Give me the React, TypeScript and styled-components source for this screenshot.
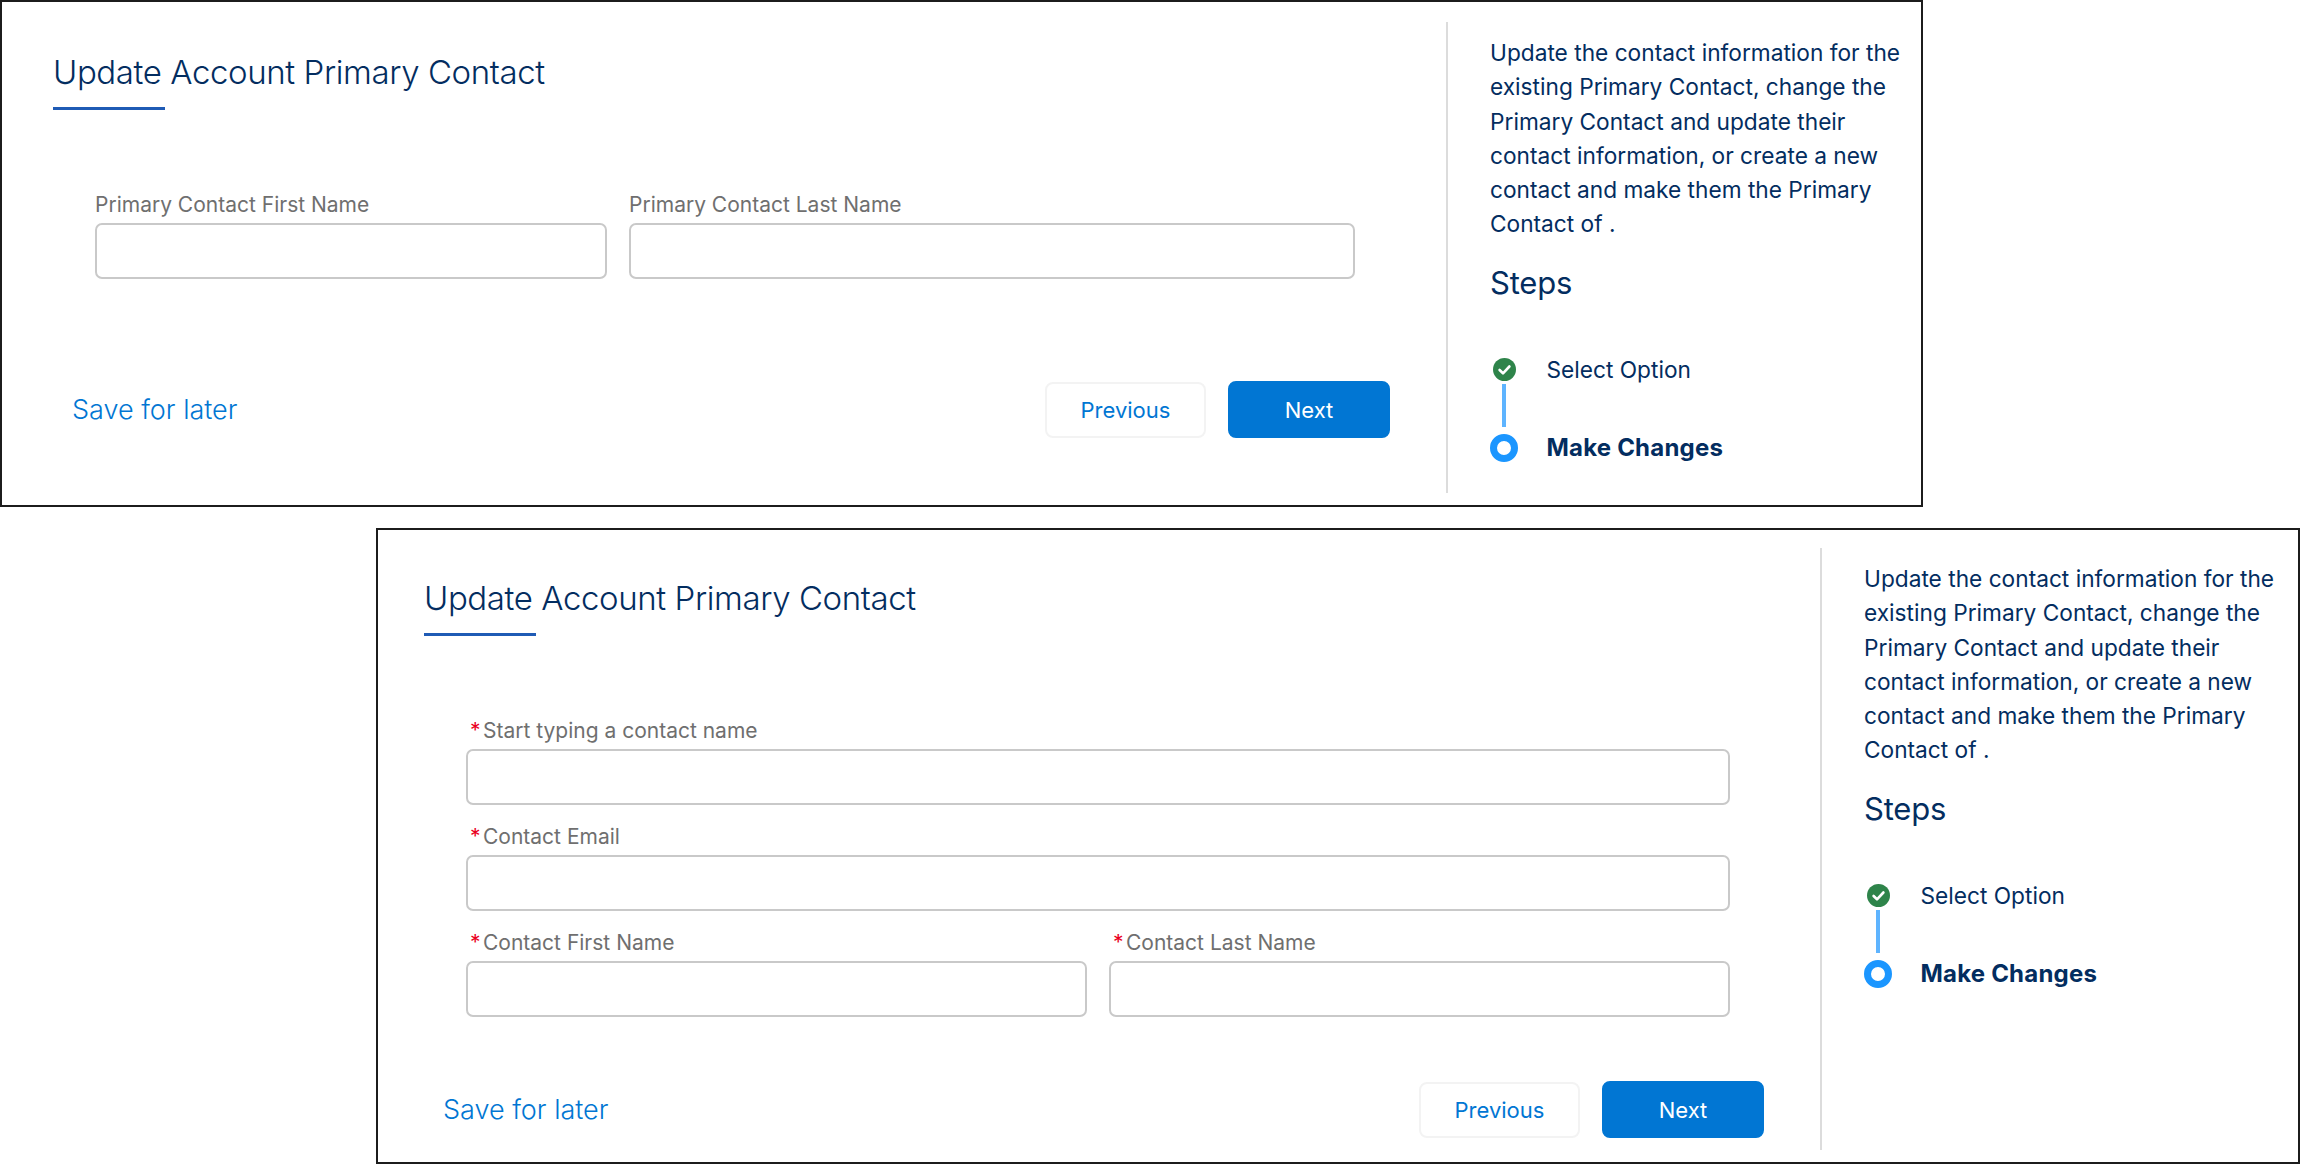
import React from "react";
import styled, { createGlobalStyle } from "styled-components";

const Global = createGlobalStyle`
  html, body { margin: 0; padding: 0; background: #fff; }
  body { font-family: Inter, "Liberation Sans", sans-serif; }
  * { box-sizing: border-box; }
`;

const Page = styled.div`
  width: 2300px;
  height: 1164px;
  overflow: hidden;
  display: flex;
  flex-direction: column;
  gap: 21px;
`;

const Panel = styled.section<{ $x: number; $w: number; $h: number; $pad: number; $top: number }>`
  margin-left: ${(p) => p.$x}px;
  width: ${(p) => p.$w}px;
  height: ${(p) => p.$h}px;
  padding: ${(p) => p.$top}px 0 12px ${(p) => p.$pad}px;
  border: 2px solid #1c1c1c;
  background: #fff;
  display: flex;
`;

const Main = styled.div`
  flex: 1;
  min-width: 0;
  display: flex;
  flex-direction: column;
`;

const Title = styled.h1`
  margin: 30px 0 0;
  font-size: 33px;
  font-weight: 300;
  line-height: 40px;
  letter-spacing: -0.4px;
  color: #032d60;
`;

const Rule = styled.div`
  width: 112px;
  height: 3px;
  margin-top: 15px;
  background: #1f5bb5;
`;

const Form = styled.div<{ $h: number; $right: number }>`
  height: ${(p) => p.$h}px;
  margin-top: 82px;
  padding: 0 ${(p) => p.$right}px 0 42px;
  display: flex;
  flex-direction: column;
  gap: 19px;
`;

const Row = styled.div`
  display: flex;
  gap: 22px;
`;

const Field = styled.div`
  flex: none;
`;

const Cell = styled.div<{ $basis?: number }>`
  flex: ${(p) => (p.$basis ? `0 0 ${p.$basis}px` : "1 1 0")};
  min-width: 0;
`;

const Label = styled.label`
  display: block;
  height: 24px;
  margin-bottom: 7px;
  padding-top: 1px;
  font-size: 21px;
  line-height: 24px;
  color: #6f6f6f;
  white-space: nowrap;
`;

const Star = styled.span`
  display: inline-block;
  width: 13px;
  margin-left: 4px;
  color: #ea001e;
`;

const Input = styled.input`
  display: block;
  width: 100%;
  height: 56px;
  border: 2px solid #c9c9c9;
  border-radius: 7px;
  background: #fff;
  outline: none;
`;

const Footer = styled.div`
  padding: 0 56px 0 19px;
  display: flex;
  align-items: center;
  justify-content: space-between;
`;

const SaveLink = styled.a`
  font-size: 27px;
  font-weight: 300;
  color: #0176d3;
  text-decoration: none;
`;

const Actions = styled.div`
  display: flex;
  align-items: center;
  gap: 22px;
`;

const Button = styled.button<{ $primary?: boolean }>`
  width: ${(p) => (p.$primary ? 162 : 161)}px;
  height: ${(p) => (p.$primary ? 57 : 56)}px;
  border-radius: 8px;
  border: 2px solid ${(p) => (p.$primary ? "#0176d3" : "#f3f3f3")};
  background: ${(p) => (p.$primary ? "#0176d3" : "#fff")};
  color: ${(p) => (p.$primary ? "#fff" : "#0176d3")};
  font-family: inherit;
  font-size: 22px;
  font-weight: 400;
  padding: 0;
`;

const Aside = styled.aside<{ $w: number }>`
  flex: 0 0 ${(p) => p.$w}px;
  align-self: stretch;
  border-left: 2px solid #dcdcdc;
  padding: 14px 0 0 42px;
`;

const Description = styled.p`
  margin: 0;
  width: 420px;
  font-size: 22.7px;
  line-height: 34.3px;
  color: #032d60;
`;

const StepsTitle = styled.h2`
  margin: 21px 0 0;
  font-size: 31px;
  line-height: 40px;
  font-weight: 400;
  letter-spacing: -0.2px;
  color: #032d60;
`;

const StepList = styled.div`
  margin-top: 53px;
  display: flex;
  flex-direction: column;
`;

const Step = styled.div`
  display: flex;
  align-items: center;
  height: 28px;
`;

const StepIcon = styled.div`
  flex: 0 0 28px;
  display: flex;
  justify-content: center;
`;

const StepName = styled.span<{ $active?: boolean }>`
  margin-left: 28.5px;
  font-size: ${(p) => (p.$active ? 24 : 22.7)}px;
  font-weight: ${(p) => (p.$active ? 700 : 400)};
  letter-spacing: ${(p) => (p.$active ? 0.2 : 0)}px;
  color: #032d60;
`;

const Connector = styled.div`
  width: 4px;
  height: 43px;
  margin: 0 0 7px 12px;
  background: #5eb4ff;
`;

const Ring = styled.div`
  width: 28px;
  height: 28px;
  border-radius: 50%;
  border: 7px solid #1b96ff;
  background: #fff;
`;

const Done = () => (
  <svg width="23" height="23" viewBox="0 0 23 23">
    <circle cx="11.5" cy="11.5" r="11.5" fill="#2e844a" />
    <path d="M6.6 12l3.4 3.3 6.4-6.8" fill="none" stroke="#fff" strokeWidth="2.6" strokeLinecap="round" strokeLinejoin="round" />
  </svg>
);

const Sidebar = ({ width }: { width: number }) => (
  <Aside $w={width}>
    <Description>
      Update the contact information for the existing Primary Contact, change the Primary Contact and update their
      contact information, or create a new contact and make them the Primary Contact of .
    </Description>
    <StepsTitle>Steps</StepsTitle>
    <StepList>
      <Step>
        <StepIcon><Done /></StepIcon>
        <StepName>Select Option</StepName>
      </Step>
      <Connector />
      <Step>
        <StepIcon><Ring /></StepIcon>
        <StepName $active>Make Changes</StepName>
      </Step>
    </StepList>
  </Aside>
);

const Bottom = () => (
  <Footer>
    <SaveLink href="#">Save for later</SaveLink>
    <Actions>
      <Button>Previous</Button>
      <Button $primary>Next</Button>
    </Actions>
  </Footer>
);

const Req = ({ children }: { children: React.ReactNode }) => (
  <Label>
    <Star>*</Star>
    {children}
  </Label>
);

export default function App() {
  return (
    <Page>
      <Global />
      <Panel $x={0} $w={1923} $h={507} $pad={51} $top={20}>
        <Main>
          <Title>Update Account Primary Contact</Title>
          <Rule />
          <Form $h={189} $right={91}>
            <Row>
              <Cell $basis={512}>
                <Label>Primary Contact First Name</Label>
                <Input />
              </Cell>
              <Cell>
                <Label>Primary Contact Last Name</Label>
                <Input />
              </Cell>
            </Row>
          </Form>
          <Bottom />
        </Main>
        <Sidebar width={475} />
      </Panel>
      <Panel $x={376} $w={1924} $h={636} $pad={46} $top={18}>
        <Main>
          <Title>Update Account Primary Contact</Title>
          <Rule />
          <Form $h={363} $right={90}>
            <Field>
              <Req>Start typing a contact name</Req>
              <Input />
            </Field>
            <Field>
              <Req>Contact Email</Req>
              <Input />
            </Field>
            <Row>
              <Cell>
                <Req>Contact First Name</Req>
                <Input />
              </Cell>
              <Cell>
                <Req>Contact Last Name</Req>
                <Input />
              </Cell>
            </Row>
          </Form>
          <Bottom />
        </Main>
        <Sidebar width={478} />
      </Panel>
    </Page>
  );
}
